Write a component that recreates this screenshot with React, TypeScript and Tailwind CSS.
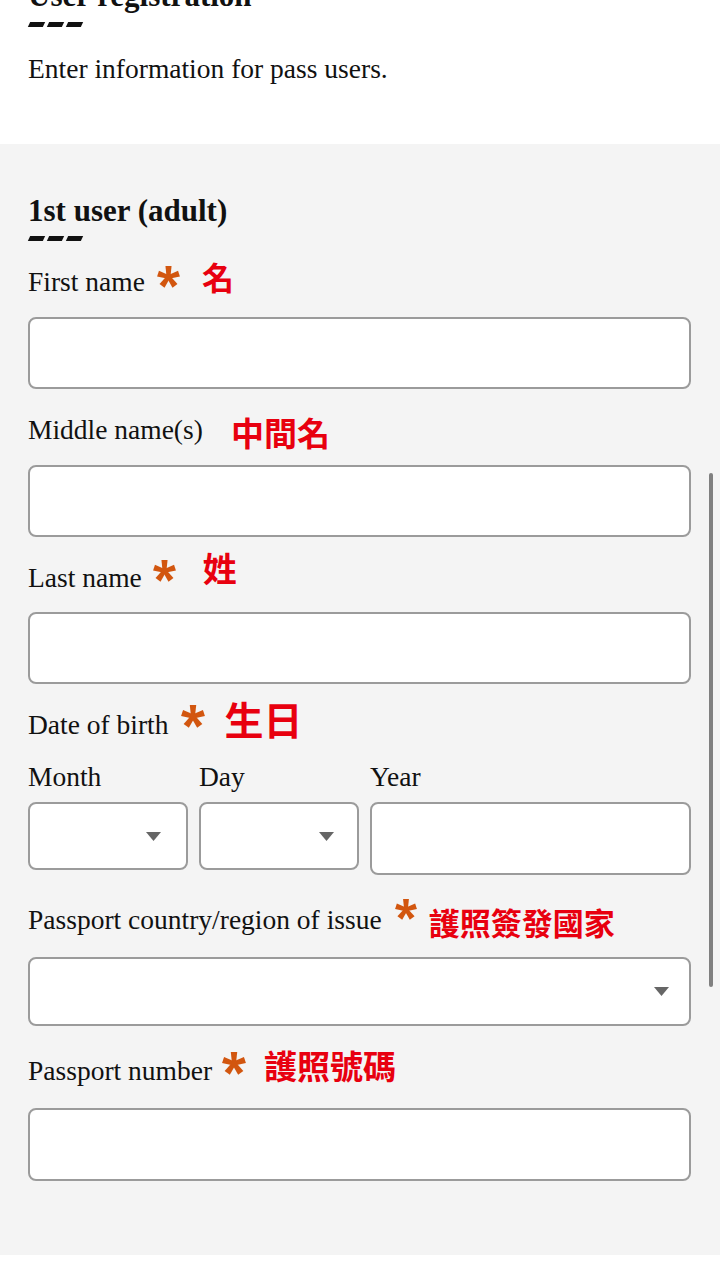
import { ReactNode } from 'react';

const CJK = "font-['Noto_Sans_CJK_TC',sans-serif] font-bold text-[#e8000f]";

function Dashes() {
  return (
    <div className="flex gap-[4px] pl-[1px]">
      <span className="block h-[5px] w-[15px] -skew-x-[25deg] bg-[#111]" />
      <span className="block h-[5px] w-[15px] -skew-x-[25deg] bg-[#111]" />
      <span className="block h-[5px] w-[15px] -skew-x-[25deg] bg-[#111]" />
    </div>
  );
}

function Asterisk({ className }: { className?: string }) {
  // five-armed asterisk, arms a bit wider at the tips
  const arms = [-90, -18, 54, 126, 198];
  return (
    <svg viewBox="0 0 24 24" className={className} width="24" height="24">
      {arms.map((a) => {
        const r = (a * Math.PI) / 180;
        const px = -Math.sin(r);
        const py = Math.cos(r);
        const tx = 12 + Math.cos(r) * 11.5;
        const ty = 12.5 + Math.sin(r) * 11.5;
        const d = `M${12 + px * 2} ${12.5 + py * 2} L${tx + px * 3.2} ${ty + py * 3.2} L${tx - px * 3.2} ${ty - py * 3.2} L${12 - px * 2} ${12.5 - py * 2} Z`;
        return <path key={a} d={d} fill="#d2560f" />;
      })}
      <circle cx="12" cy="12.5" r="3" fill="#d2560f" />
    </svg>
  );
}

function Caret() {
  return (
    <svg width="15" height="9" viewBox="0 0 15 9">
      <path d="M0 0 H15 L7.5 9 Z" fill="#666" />
    </svg>
  );
}

interface LabelRowProps {
  label: string;
  cjk: string;
  cjkClass: string;
  required?: boolean;
  astClass?: string;
  className?: string;
}

function LabelRow({ label, cjk, cjkClass, required, astClass, className }: LabelRowProps) {
  return (
    <div className={`flex h-[48px] items-end ${className ?? ''}`}>
      <span className="text-[27.5px] leading-[33px] text-[#111]">{label}</span>
      {required && <Asterisk className={astClass} />}
      <span className={`${CJK} leading-none ${cjkClass}`}>{cjk}</span>
    </div>
  );
}

function Box({ className, children }: { className?: string; children?: ReactNode }) {
  return (
    <div className={`rounded-[8px] border-2 border-[#9b9b9b] bg-white ${className ?? ''}`}>{children}</div>
  );
}

function SelectBox({ className }: { className?: string }) {
  return (
    <Box className={`flex items-center justify-end ${className ?? ''}`}>
      <Caret />
    </Box>
  );
}

export default function App() {
  return (
    <div className="relative h-[1280px] w-[720px] overflow-hidden bg-white font-['Liberation_Serif',serif] text-[#111]">
      <section className="pb-[59px] pl-[28px] pr-[29px]">
        <h1 className="-mt-[22px] text-[31px] font-bold leading-[36px]">User registration</h1>
        <div className="mt-[8px]">
          <Dashes />
        </div>
        <p className="mt-[25px] text-[27.5px] leading-[33px]">Enter information for pass users.</p>
      </section>

      <section className="bg-[#f4f4f4] pb-[74px] pl-[28px] pr-[29px] pt-[49px]">
        <h2 className="text-[31px] font-bold leading-[36px]">1st user (adult)</h2>
        <div className="mt-[7px]">
          <Dashes />
        </div>

        <LabelRow
          className="mt-[9px]"
          label="First name"
          required
          astClass="mb-[10px] ml-[12px] h-[23px] w-[23px]"
          cjk="名"
          cjkClass="mb-[6px] ml-[22px] text-[32px]"
        />
        <Box className="mt-[19px] h-[72px]" />

        <LabelRow
          className="mt-[9px]"
          label="Middle name(s)"
          cjk="中間名"
          cjkClass="-mb-[3px] ml-[28px] text-[33px]"
        />
        <Box className="mt-[19px] h-[72px]" />

        <LabelRow
          className="mt-[9px]"
          label="Last name"
          required
          astClass="mb-[12px] ml-[11px] h-[23px] w-[23px]"
          cjk="姓"
          cjkClass="mb-[9px] ml-[27px] text-[34px]"
        />
        <Box className="mt-[18px] h-[72px]" />

        <LabelRow
          className="mt-[9px]"
          label="Date of birth"
          required
          astClass="mb-[13px] ml-[12px] h-[24px] w-[24px]"
          cjk="生日"
          cjkClass="mb-[3px] ml-[20px] text-[39px]"
        />
        <div className="mt-[19px] grid grid-cols-[160px_160px_1fr] gap-x-[11px] gap-y-[9px]">
          <span className="text-[27.5px] leading-[33px]">Month</span>
          <span className="text-[27.5px] leading-[33px]">Day</span>
          <span className="text-[27.5px] leading-[33px]">Year</span>
          <SelectBox className="h-[68px] pr-[25px]" />
          <SelectBox className="h-[68px] pr-[23px]" />
          <Box className="h-[73px]" />
        </div>

        <LabelRow
          className="mt-[13px]"
          label="Passport country/region of issue"
          required
          astClass="mb-[16px] ml-[13px] h-[22px] w-[22px]"
          cjk="護照簽發國家"
          cjkClass="-mb-[1px] ml-[12px] text-[31px]"
        />
        <SelectBox className="mt-[21px] h-[69px] pr-[20px]" />

        <LabelRow
          className="mt-[13px]"
          label="Passport number"
          required
          astClass="mb-[12px] ml-[10px] h-[24px] w-[24px]"
          cjk="護照號碼"
          cjkClass="mb-[5px] ml-[18px] text-[33px]"
        />
        <Box className="mt-[21px] h-[73px]" />
      </section>

      <div className="absolute right-[7px] top-[473px] h-[514px] w-[4px] rounded-full bg-[#808080]" />
    </div>
  );
}
